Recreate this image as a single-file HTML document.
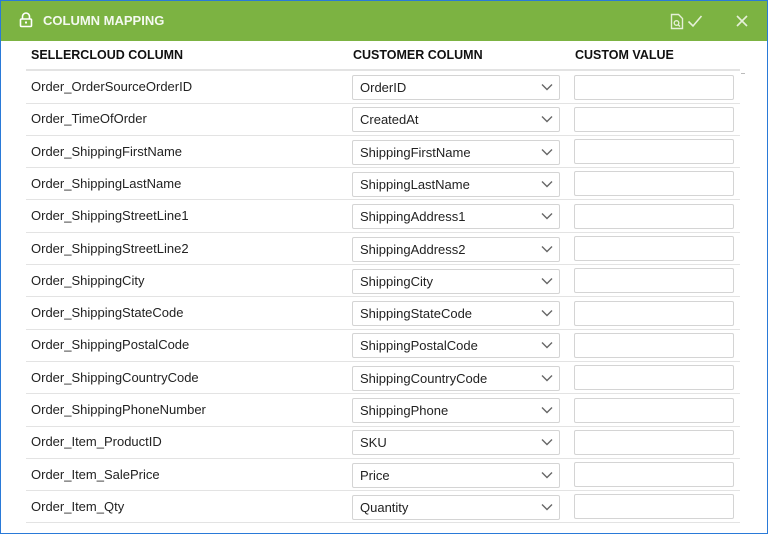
<!DOCTYPE html>
<html><head><style>
*{box-sizing:border-box;margin:0;padding:0}
body{width:768px;height:534px;background:#fff;font-family:"Liberation Sans",Arial,sans-serif;position:relative;overflow:hidden}
.frame{position:absolute;left:0;top:0;width:768px;height:534px;border:1px solid #2a7ad8;border-top:none}
.hdr{position:absolute;left:1px;top:0;width:766px;height:41px;background:#7cb342;border-top:1px solid #2a7ad8}
.hdr .t{position:absolute;left:42px;top:12px;color:#fff;font-weight:bold;font-size:13px;opacity:.92}
.th{position:absolute;top:48px;font-weight:bold;font-size:12.5px;color:#111}
.line{position:absolute;left:26px;width:714px;height:1px;background:#e3e3e3}
.lbl{position:absolute;left:31px;font-size:13px;color:#222}
.sel{position:absolute;left:352px;width:208px;height:25px;border:1px solid #d4d4d4;border-radius:2px;font-size:13px;color:#222;padding:4px 0 0 7px}
.sel svg{position:absolute;right:6px;top:7px}
.inp{position:absolute;left:574px;width:160px;height:25px;border:1px solid #d4d4d4;border-radius:2px}
</style></head><body>
<div class="frame"></div>
<div class="hdr">
<svg style="position:absolute;left:18px;top:11px" width="14" height="16" viewBox="0 0 14 16" fill="none" stroke="#fff" stroke-width="1.6"><path d="M3.5 7V4.5a3.5 3.5 0 0 1 7 0V7"/><rect x="1.5" y="7" width="11" height="7.5" rx="1"/><rect x="6" y="9.5" width="2" height="2" fill="#fff" stroke="none"/></svg>
<div class="t">COLUMN MAPPING</div>
<svg style="position:absolute;left:669px;top:12px" width="14" height="17" viewBox="0 0 14 17" fill="none" stroke="#e6f0d8" stroke-width="1.4"><path d="M1.5 1.5h7l4 4v10h-11z"/><circle cx="6.5" cy="10" r="2.3"/><path d="M8.2 11.7l1.8 1.8"/></svg>
<svg style="position:absolute;left:686px;top:13px" width="16" height="14" viewBox="0 0 16 14" fill="none" stroke="#e6f0d8" stroke-width="1.6"><path d="M1.5 7.5l4.5 4.5 8.5-10"/></svg>
<svg style="position:absolute;left:735px;top:14px" width="12" height="12" viewBox="0 0 12 12" fill="none" stroke="#e6f0d8" stroke-width="1.6"><path d="M1 1l10 10M11 1L1 11"/></svg>
</div>
<div class="th" style="left:31px">SELLERCLOUD COLUMN</div>
<div class="th" style="left:353px">CUSTOMER COLUMN</div>
<div class="th" style="left:575px">CUSTOM VALUE</div>
<div style="position:absolute;left:741px;top:73px;width:4px;height:1px;background:#bbb"></div>
<div id="rows"></div>
<script>
var d=[["Order_OrderSourceOrderID","OrderID"],["Order_TimeOfOrder","CreatedAt"],["Order_ShippingFirstName","ShippingFirstName"],["Order_ShippingLastName","ShippingLastName"],["Order_ShippingStreetLine1","ShippingAddress1"],["Order_ShippingStreetLine2","ShippingAddress2"],["Order_ShippingCity","ShippingCity"],["Order_ShippingStateCode","ShippingStateCode"],["Order_ShippingPostalCode","ShippingPostalCode"],["Order_ShippingCountryCode","ShippingCountryCode"],["Order_ShippingPhoneNumber","ShippingPhone"],["Order_Item_ProductID","SKU"],["Order_Item_SalePrice","Price"],["Order_Item_Qty","Quantity"]];
var h='<div class="line" style="top:69px;height:2px"></div>';
var chev='<svg width="12" height="8" viewBox="0 0 12 8" fill="none" stroke="#666" stroke-width="1.4"><path d="M1 1.5l5 5 5-5"/></svg>';
for(var i=0;i<d.length;i++){var y=71+i*32.3;
h+='<div class="lbl" style="top:'+(y+8)+'px">'+d[i][0]+'</div>';
h+='<div class="sel" style="top:'+(y+4)+'px">'+d[i][1]+chev+'</div>';
h+='<div class="inp" style="top:'+(y+3.5)+'px"></div>';
h+='<div class="line" style="top:'+Math.round(y+31.5)+'px"></div>';}
document.getElementById('rows').innerHTML=h;
</script>
</body></html>
